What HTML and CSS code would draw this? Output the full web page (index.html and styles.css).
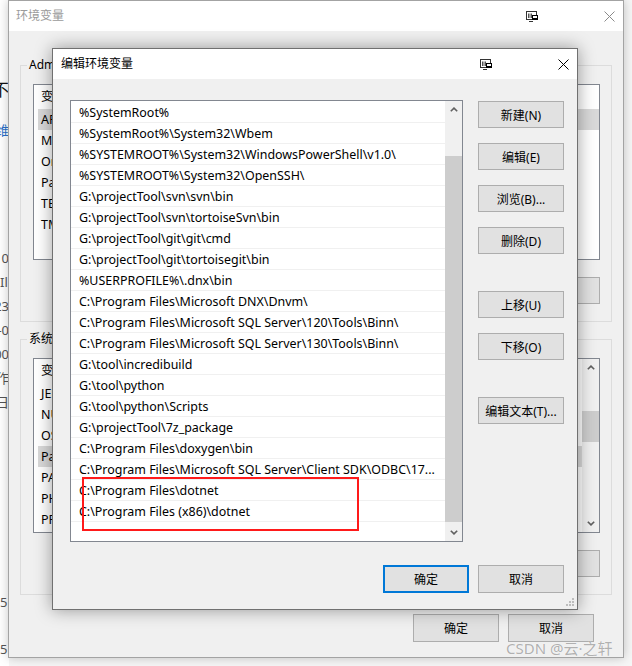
FILE: index.html
```html
<!DOCTYPE html>
<html lang="zh-CN">
<head>
<meta charset="utf-8">
<title>编辑环境变量</title>
<link rel="stylesheet" href="styles.css">
</head>
<body>
<div class="behind">
  <div class="bl bl-big">不</div>
  <div class="bl bl-blue">维</div>
  <div class="bl bl-d1">10</div>
  <div class="bl">Il</div>
  <div class="bl">23</div>
  <div class="bl">0-</div>
  <div class="bl">00</div>
  <div class="bl">作</div>
  <div class="bl">日</div>
  <div class="bl bl-low">5</div>
  <div class="bl bl-low2">5</div>
</div>

<div class="win win-back">
  <div class="titlebar">
    <span class="title title-inactive">环境变量</span>
    <div class="tb-icons">
      <svg class="ico-pin" width="12" height="11" viewBox="0 0 12 11"><rect x="0.5" y="0.5" width="10" height="8" fill="none" stroke="#333"/><path d="M2.5 2.5v4.5M4 2.5v4.5M5.5 2.5v4.5" stroke="#555"/><rect x="6" y="4" width="6" height="5" fill="#000"/><rect x="7" y="5" width="4" height="2" fill="#fff"/><path d="M3 10.5h4" stroke="#333"/></svg>
      <svg class="ico-x" width="11" height="11" viewBox="0 0 11 11"><path d="M0.5 0.5l10 10M10.5 0.5l-10 10" stroke="#8a8a8a" stroke-width="1"/></svg>
    </div>
  </div>
  <div class="back-body">
    <fieldset class="group group-user">
      <legend>Administrator 的用户变量(U)</legend>
      <div class="vlist vlist-user">
        <div class="vitems">
          <div class="vhead">变量</div>
          <div class="vrow sel">APPDATA</div>
          <div class="vrow">MOZ_PLUGIN_PATH</div>
          <div class="vrow">OneDrive</div>
          <div class="vrow">Path</div>
          <div class="vrow">TEMP</div>
          <div class="vrow">TMP</div>
        </div>
      </div>
      <div class="btnrow">
        <div class="btn">新建(N)...</div>
        <div class="btn">编辑(E)...</div>
        <div class="btn">删除(D)</div>
      </div>
    </fieldset>
    <fieldset class="group group-sys">
      <legend>系统变量(S)</legend>
      <div class="vlist vlist-sys">
        <div class="vitems">
          <div class="vhead">变量</div>
          <div class="vrow">JENKINS_HOME</div>
          <div class="vrow">NUMBER_OF_PROCESSORS</div>
          <div class="vrow">OS</div>
          <div class="vrow sel">Path</div>
          <div class="vrow">PATHEXT</div>
          <div class="vrow">PHP_HOME</div>
          <div class="vrow">PROCESSOR_ARCHITECTURE</div>
        </div>
        <div class="sb sb-back">
          <div class="sb-btn"><svg width="8" height="5" viewBox="0 0 8 5"><path d="M0.8 4.3L4 1.1l3.2 3.2" fill="none" stroke="#606060" stroke-width="1.6"/></svg></div>
          <div class="sb-track sb-track-back"><div class="sb-thumb thumb-back"></div></div>
          <div class="sb-btn"><svg width="8" height="5" viewBox="0 0 8 5"><path d="M0.8 0.7L4 3.9l3.2-3.2" fill="none" stroke="#606060" stroke-width="1.6"/></svg></div>
        </div>
      </div>
      <div class="btnrow">
        <div class="btn">新建(W)...</div>
        <div class="btn">编辑(I)...</div>
        <div class="btn">删除(L)</div>
      </div>
    </fieldset>
    <div class="okrow okrow-back">
      <div class="btn">确定</div>
      <div class="btn">取消</div>
    </div>
  </div>
</div>

<div class="win dlg">
  <div class="titlebar">
    <span class="title">编辑环境变量</span>
    <div class="tb-icons">
      <svg class="ico-pin" width="12" height="11" viewBox="0 0 12 11"><rect x="0.5" y="0.5" width="10" height="8" fill="none" stroke="#333"/><path d="M2.5 2.5v4.5M4 2.5v4.5M5.5 2.5v4.5" stroke="#555"/><rect x="6" y="4" width="6" height="5" fill="#000"/><rect x="7" y="5" width="4" height="2" fill="#fff"/><path d="M3 10.5h4" stroke="#333"/></svg>
      <svg class="ico-x" width="11" height="11" viewBox="0 0 11 11"><path d="M0.5 0.5l10 10M10.5 0.5l-10 10" stroke="#000" stroke-width="1"/></svg>
    </div>
  </div>
  <div class="dlg-body">
    <div class="plist">
      <div class="pitems">
        <div class="prow">%SystemRoot%</div>
        <div class="prow">%SystemRoot%\System32\Wbem</div>
        <div class="prow">%SYSTEMROOT%\System32\WindowsPowerShell\v1.0\</div>
        <div class="prow">%SYSTEMROOT%\System32\OpenSSH\</div>
        <div class="prow">G:\projectTool\svn\svn\bin</div>
        <div class="prow">G:\projectTool\svn\tortoiseSvn\bin</div>
        <div class="prow">G:\projectTool\git\git\cmd</div>
        <div class="prow">G:\projectTool\git\tortoisegit\bin</div>
        <div class="prow">%USERPROFILE%\.dnx\bin</div>
        <div class="prow">C:\Program Files\Microsoft DNX\Dnvm\</div>
        <div class="prow">C:\Program Files\Microsoft SQL Server\120\Tools\Binn\</div>
        <div class="prow">C:\Program Files\Microsoft SQL Server\130\Tools\Binn\</div>
        <div class="prow">G:\tool\incredibuild</div>
        <div class="prow">G:\tool\python</div>
        <div class="prow">G:\tool\python\Scripts</div>
        <div class="prow">G:\projectTool\7z_package</div>
        <div class="prow">C:\Program Files\doxygen\bin</div>
        <div class="prow">C:\Program Files\Microsoft SQL Server\Client SDK\ODBC\17...</div>
        <div class="prow">C:\Program Files\dotnet</div>
        <div class="prow">C:\Program Files (x86)\dotnet</div>
        <div class="redbox"></div>
      </div>
      <div class="sb">
        <div class="sb-btn"><svg width="8" height="5" viewBox="0 0 8 5"><path d="M0.8 4.3L4 1.1l3.2 3.2" fill="none" stroke="#606060" stroke-width="1.6"/></svg></div>
        <div class="sb-track"><div class="sb-thumb"></div></div>
        <div class="sb-btn"><svg width="8" height="5" viewBox="0 0 8 5"><path d="M0.8 0.7L4 3.9l3.2-3.2" fill="none" stroke="#606060" stroke-width="1.6"/></svg></div>
      </div>
    </div>
    <div class="side">
      <div class="btn">新建(N)</div>
      <div class="btn">编辑(E)</div>
      <div class="btn">浏览(B)...</div>
      <div class="btn">删除(D)</div>
      <div class="btn btn-sep">上移(U)</div>
      <div class="btn">下移(O)</div>
      <div class="btn btn-sep">编辑文本(T)...</div>
    </div>
    <div class="okrow okrow-dlg">
      <div class="btn btn-default">确定</div>
      <div class="btn">取消</div>
    </div>
  </div>
  <svg class="grip" width="9" height="9" viewBox="0 0 9 9"><path fill="#bdbdbd" d="M6 0h2v2H6zM3 3h2v2H3zM6 3h2v2H6zM0 6h2v2H0zM3 6h2v2H3zM6 6h2v2H6z"/></svg>
</div>

<div class="watermark">CSDN @云·之轩</div>
</body>
</html>
```

FILE: styles.css
```css
* { box-sizing: border-box; }
html, body { margin: 0; padding: 0; }
body {
  width: 632px;
  height: 666px;
  overflow: hidden;
  position: relative;
  background: #f6f6f6;
  font-family: "Noto Sans", "Noto Sans CJK SC", sans-serif;
  font-size: 12px;
  color: #000;
}

/* page behind the windows */
.behind {
  position: absolute;
  left: 0;
  top: 0;
  width: 9px;
  height: 666px;
  overflow: hidden;
  background: #fff;
  padding-top: 78px;
}
.bl {
  width: 9px;
  height: 24px;
  line-height: 24px;
  white-space: nowrap;
  direction: rtl;
  text-align: left;
  font-size: 13px;
  color: #555;
  margin-right: -4px;
}
.bl-big { font-size: 17px; color: #111; height: 40px; }
.bl-blue { color: #2a6fc9; height: 128px; }
.bl-low { margin-top: 176px; }
.bl-low2 { margin-top: 23px; }

/* windows */
.win {
  position: absolute;
  background: #f0f0f0;
  display: flex;
  flex-direction: column;
}
.win-back {
  left: 8px;
  top: 0;
  width: 616px;
  height: 658px;
  border: 1px solid #a3a3a3;
  box-shadow: 0 0 10px rgba(0, 0, 0, 0.22);
}
.dlg {
  left: 52px;
  top: 48px;
  width: 526px;
  height: 562px;
  border: 1px solid #707070;
  box-shadow: 0 0 16px rgba(0, 0, 0, 0.38);
}

.titlebar {
  height: 30px;
  flex: none;
  background: #fff;
  display: flex;
  align-items: center;
  padding-left: 7px;
  padding-right: 8px;
}
.dlg .titlebar { padding-left: 8px; }
.title { font-size: 12px; line-height: 16px; }
.title-inactive { color: #9a9a9a; }
.tb-icons {
  margin-left: auto;
  display: flex;
  align-items: center;
  gap: 66px;
}
.ico-pin { display: block; margin-top: 1px; }
.ico-x { display: block; }

/* back window body */
.back-body {
  padding: 0 11px;
}
.group {
  border: 1px solid #dcdcdc;
  margin: 26px 0 0;
  padding: 11px 11px 17px 12px;
  min-width: 0;
}
.group-sys { margin-top: 9px; }
.group legend {
  padding: 0 2px;
  margin-left: -6px;
  line-height: 16px;
  font-size: 12px;
}
.vlist {
  background: #fff;
  border: 1px solid #828790;
  display: flex;
  overflow: hidden;
}
.vlist-user { height: 176px; }
.vlist-sys { height: 175px; }
.vitems {
  flex: 1;
  padding-left: 4px;
  overflow: hidden;
}
.vhead {
  height: 24px;
  line-height: 24px;
  padding-left: 3px;
  font-size: 12.5px;
}
.vrow {
  height: 21px;
  line-height: 21px;
  padding-left: 3px;
  white-space: nowrap;
  font-size: 12.5px;
}
.vrow.sel { background: #d9d9d9; }

.btnrow {
  display: flex;
  justify-content: flex-end;
  gap: 10px;
  margin-top: 17px;
}
.btn {
  width: 86px;
  height: 27px;
  background: #e1e1e1;
  border: 1px solid #adadad;
  display: flex;
  align-items: center;
  justify-content: center;
  font-size: 12px;
  white-space: nowrap;
}
.okrow {
  display: flex;
  justify-content: flex-end;
  gap: 9px;
}
.okrow .btn { height: 28px; }
.okrow-back { margin-top: 19px; padding-right: 18px; }
.okrow-back .btn { width: 86px; }

/* dialog body */
.dlg-body {
  display: grid;
  grid-template-columns: 393px 86px;
  column-gap: 15px;
  padding: 21px 0 0 17px;
}
.plist {
  height: 442px;
  background: #fff;
  border: 1px solid #828790;
  display: flex;
}
.pitems {
  flex: 1;
  position: relative;
  overflow: hidden;
  padding-top: 1px;
}
.prow {
  height: 21px;
  line-height: 21px;
  border-bottom: 1px solid #f0f0f0;
  padding-left: 8px;
  white-space: nowrap;
  overflow: hidden;
  font-size: 12.45px;
}
.redbox {
  position: absolute;
  left: 11px;
  top: 376px;
  width: 277px;
  height: 54px;
  border: 2px solid #ff1a1a;
}

.sb {
  width: 17px;
  flex: none;
  background: #f0f0f0;
  display: flex;
  flex-direction: column;
}
.sb-btn {
  height: 17px;
  flex: none;
  display: flex;
  align-items: center;
  justify-content: center;
}
.sb-btn svg { display: block; }
.sb-track {
  flex: 1;
  padding-top: 38px;
}
.sb-thumb {
  height: 366px;
  background: #cdcdcd;
}
.sb-track-back { padding-top: 35px; }
.thumb-back { height: 31px; }

.side {
  display: flex;
  flex-direction: column;
  gap: 15px;
  padding-top: 1px;
}
.side .btn { flex: none; }
.side .btn-sep { margin-top: 22px; }

.okrow-dlg {
  grid-column: 1 / 3;
  margin-top: 23px;
}
.btn-default {
  border: 2px solid #0078d7;
}

.grip {
  position: absolute;
  right: 2px;
  bottom: 2px;
}

.watermark {
  position: absolute;
  left: 506px;
  top: 638px;
  font-size: 15px;
  line-height: 20px;
  color: rgba(110, 110, 110, 0.55);
  text-shadow: 0 0 1px #fff;
  white-space: nowrap;
}
```
